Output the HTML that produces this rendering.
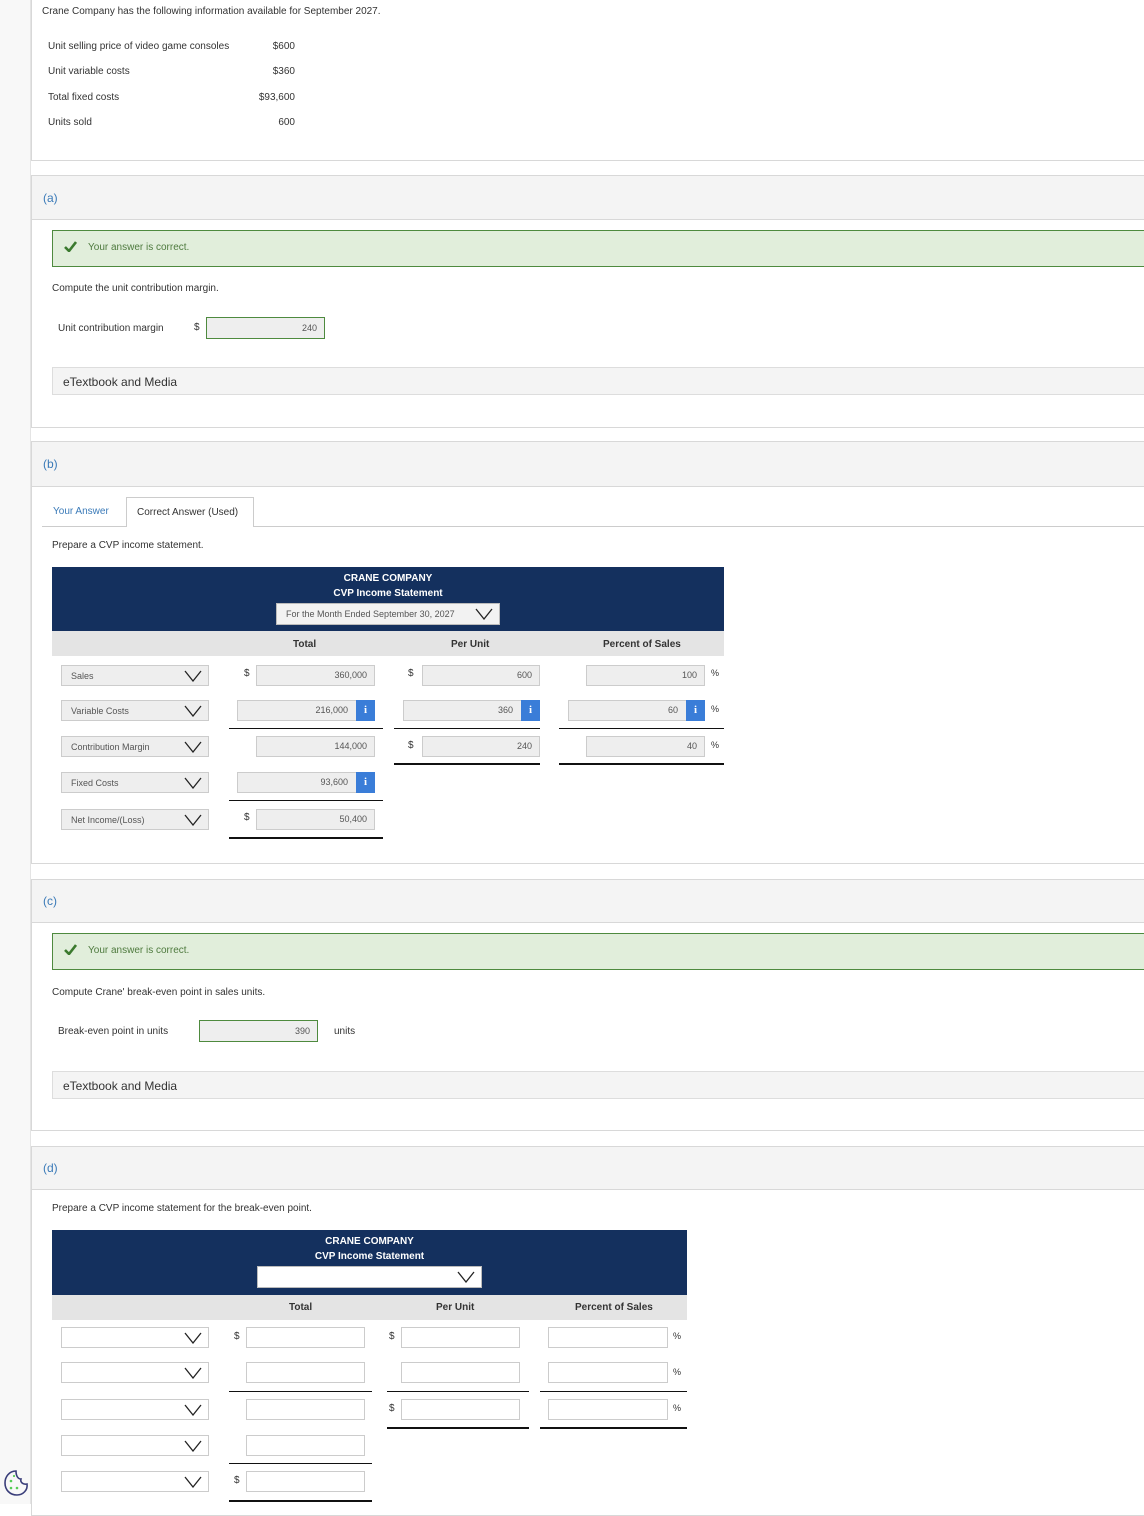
<!DOCTYPE html>
<html><head><meta charset="utf-8"><style>
*{box-sizing:border-box;margin:0;padding:0}
body{width:1144px;height:1504px;position:relative;overflow:hidden;background:#fff;font-family:"Liberation Sans",sans-serif;color:#333;font-size:10px}
.a{position:absolute;white-space:nowrap}
.box{position:absolute;left:31px;width:1120px;border:1px solid #d8d8d8;background:#fff}
.hd{position:absolute;left:31px;width:1120px;background:#f4f4f4;border:1px solid #d8d8d8;color:#3a7ab8;font-size:12px;padding-left:11px}
.ok{position:absolute;left:52px;width:1100px;height:37px;background:#e1eedb;border:1px solid #4e8a3e;color:#4e7a3e;font-size:10px}
.etb{position:absolute;left:52px;width:1100px;height:28px;background:#f4f4f4;border:1px solid #ddd;font-size:12px;padding:7px 10px;color:#333}
.in{position:absolute;height:21px;background:#eee;border:1px solid #ccc;text-align:right;padding:4px 7px 0 0;font-size:9px;color:#555}
.i{position:absolute;right:-1px;top:-1px;width:19px;height:21px;background:#3a7dd8;color:#fff;font-weight:bold;text-align:center;font-family:"Liberation Serif",serif;font-size:11px;line-height:21px;padding:0}
.dd{position:absolute;left:61px;width:148px;height:21px;border:1px solid #ccc;background:#eee;font-size:9px;color:#555;padding:5px 9px}
.dd svg,.sel svg{position:absolute;right:6px;top:4px}
.in.w,.dd.w{background:#fff}
.ln{position:absolute;height:1px;background:#111}
.bar{position:absolute;background:#14305e;color:#fff;font-weight:bold;text-align:center;font-size:10px}
.gr{position:absolute;background:#e4e4e4;font-weight:bold;font-size:10px;color:#333}
.sel{position:absolute;height:22px;background:#fff;border:1px solid #bbb;color:#555;font-size:9px;text-align:left;font-weight:normal;padding:5px 9px}
.ck{position:absolute;left:11px;top:10px}
</style></head><body>
<div class="a" style="left:0;top:0;width:31px;height:1504px;background:#f8f8f8;border-right:1px solid #e4e4e4"></div>

<div class="box" style="top:-2px;height:163px;border-top:none"></div>
<div class="a" style="left:42px;top:6px;font-size:10px">Crane Company has the following information available for September 2027.</div>
<div class="a" style="left:48px;top:41px">Unit selling price of video game consoles</div><div class="a" style="left:260px;width:35px;text-align:right;top:41px">$600</div>
<div class="a" style="left:48px;top:66px">Unit variable costs</div><div class="a" style="left:250px;width:45px;text-align:right;top:66px">$360</div>
<div class="a" style="left:48px;top:92px">Total fixed costs</div><div class="a" style="left:240px;width:55px;text-align:right;top:92px">$93,600</div>
<div class="a" style="left:48px;top:117px">Units sold</div><div class="a" style="left:250px;width:45px;text-align:right;top:117px">600</div>

<!-- (a) -->
<div class="box" style="top:175px;height:253px"></div>
<div class="hd" style="top:175px;height:45px;line-height:44px">(a)</div>
<div class="ok" style="top:230px"><svg class="ck" width="13" height="11" viewBox="0 0 13 11"><path d="M1 6 L5 10 L12 1" fill="none" stroke="#3b7a2e" stroke-width="2.6"/></svg><span class="a" style="left:35px;top:11px">Your answer is correct.</span></div>
<div class="a" style="left:52px;top:283px">Compute the unit contribution margin.</div>
<div class="a" style="left:58px;top:323px">Unit contribution margin</div>
<div class="a" style="left:194px;top:322px">$</div>
<div class="in" style="left:206px;top:317px;width:119px;height:22px;border-color:#4e8a3e;padding-top:5px">240</div>
<div class="etb" style="top:367px">eTextbook and Media</div>

<!-- (b) -->
<div class="box" style="top:441px;height:423px"></div>
<div class="hd" style="top:441px;height:46px;line-height:45px">(b)</div>
<div class="a" style="left:42px;top:526px;width:1110px;height:1px;background:#ccc"></div>
<div class="a" style="left:53px;top:506px;color:#3a7ab8">Your Answer</div>
<div class="a" style="left:126px;top:497px;width:128px;height:30px;border:1px solid #ccc;border-bottom:none;background:#fff;padding:9px 10px;font-size:10px">Correct Answer (Used)</div>
<div class="a" style="left:52px;top:540px">Prepare a CVP income statement.</div>

<div class="bar" style="left:52px;top:567px;width:672px;height:64px">
<div style="margin-top:6px">CRANE COMPANY</div><div style="margin-top:4px">CVP Income Statement</div>
<div class="sel" style="left:224px;top:36px;width:224px;background:#f2f2f2">For the Month Ended September 30, 2027<svg width="18" height="12" viewBox="0 0 18 12"><path d="M1 1 L9 11 L17 1" fill="none" stroke="#222" stroke-width="1.3"/></svg></div>
</div>
<div class="gr" style="left:52px;top:631px;width:672px;height:25px">
<span class="a" style="left:241px;top:8px">Total</span><span class="a" style="left:399px;top:8px">Per Unit</span><span class="a" style="left:551px;top:8px">Percent of Sales</span></div>

<div class="dd" style="top:665px">Sales<svg width="18" height="12" viewBox="0 0 18 12"><path d="M1 1 L9 11 L17 1" fill="none" stroke="#222" stroke-width="1.3"/></svg></div>
<div class="dd" style="top:700px">Variable Costs<svg width="18" height="12" viewBox="0 0 18 12"><path d="M1 1 L9 11 L17 1" fill="none" stroke="#222" stroke-width="1.3"/></svg></div>
<div class="dd" style="top:736px">Contribution Margin<svg width="18" height="12" viewBox="0 0 18 12"><path d="M1 1 L9 11 L17 1" fill="none" stroke="#222" stroke-width="1.3"/></svg></div>
<div class="dd" style="top:772px">Fixed Costs<svg width="18" height="12" viewBox="0 0 18 12"><path d="M1 1 L9 11 L17 1" fill="none" stroke="#222" stroke-width="1.3"/></svg></div>
<div class="dd" style="top:809px">Net Income/(Loss)<svg width="18" height="12" viewBox="0 0 18 12"><path d="M1 1 L9 11 L17 1" fill="none" stroke="#222" stroke-width="1.3"/></svg></div>

<div class="a" style="left:244px;top:668px">$</div><div class="in" style="left:256px;top:665px;width:119px">360,000</div>
<div class="in" style="left:237px;top:700px;width:138px;padding-right:26px">216,000<div class="i">i</div></div>
<div class="ln" style="left:229px;top:728px;width:154px"></div>
<div class="in" style="left:256px;top:736px;width:119px">144,000</div>
<div class="in" style="left:237px;top:772px;width:138px;padding-right:26px">93,600<div class="i">i</div></div>
<div class="ln" style="left:229px;top:800px;width:154px"></div>
<div class="a" style="left:244px;top:812px">$</div><div class="in" style="left:256px;top:809px;width:119px">50,400</div>
<div class="ln" style="left:229px;top:837px;width:154px;height:2px"></div>

<div class="a" style="left:408px;top:668px">$</div><div class="in" style="left:422px;top:665px;width:118px">600</div>
<div class="in" style="left:403px;top:700px;width:137px;padding-right:26px">360<div class="i">i</div></div>
<div class="ln" style="left:394px;top:728px;width:146px"></div>
<div class="a" style="left:408px;top:740px">$</div><div class="in" style="left:422px;top:736px;width:118px">240</div>
<div class="ln" style="left:394px;top:763px;width:146px;height:2px"></div>

<div class="in" style="left:586px;top:665px;width:119px">100</div><div class="a" style="left:711px;top:668px;font-size:9px">%</div>
<div class="in" style="left:568px;top:700px;width:137px;padding-right:26px">60<div class="i">i</div></div><div class="a" style="left:711px;top:704px;font-size:9px">%</div>
<div class="ln" style="left:559px;top:728px;width:165px"></div>
<div class="in" style="left:586px;top:736px;width:119px">40</div><div class="a" style="left:711px;top:740px;font-size:9px">%</div>
<div class="ln" style="left:559px;top:763px;width:165px;height:2px"></div>

<!-- (c) -->
<div class="box" style="top:879px;height:252px"></div>
<div class="hd" style="top:879px;height:44px;line-height:43px">(c)</div>
<div class="ok" style="top:933px"><svg class="ck" width="13" height="11" viewBox="0 0 13 11"><path d="M1 6 L5 10 L12 1" fill="none" stroke="#3b7a2e" stroke-width="2.6"/></svg><span class="a" style="left:35px;top:11px">Your answer is correct.</span></div>
<div class="a" style="left:52px;top:987px">Compute Crane' break-even point in sales units.</div>
<div class="a" style="left:58px;top:1026px">Break-even point in units</div>
<div class="in" style="left:199px;top:1020px;width:119px;height:22px;border-color:#4e8a3e;padding-top:5px">390</div>
<div class="a" style="left:334px;top:1026px">units</div>
<div class="etb" style="top:1071px">eTextbook and Media</div>

<!-- (d) -->
<div class="box" style="top:1146px;height:370px"></div>
<div class="hd" style="top:1146px;height:44px;line-height:43px">(d)</div>
<div class="a" style="left:52px;top:1203px">Prepare a CVP income statement for the break-even point.</div>

<div class="bar" style="left:52px;top:1230px;width:635px;height:65px">
<div style="margin-top:6px">CRANE COMPANY</div><div style="margin-top:4px">CVP Income Statement</div>
<div class="sel" style="left:205px;top:36px;width:225px"><svg width="18" height="12" viewBox="0 0 18 12"><path d="M1 1 L9 11 L17 1" fill="none" stroke="#222" stroke-width="1.3"/></svg></div>
</div>
<div class="gr" style="left:52px;top:1295px;width:635px;height:25px">
<span class="a" style="left:237px;top:7px">Total</span><span class="a" style="left:384px;top:7px">Per Unit</span><span class="a" style="left:523px;top:7px">Percent of Sales</span></div>

<div class="dd w" style="top:1327px"><svg width="18" height="12" viewBox="0 0 18 12"><path d="M1 1 L9 11 L17 1" fill="none" stroke="#222" stroke-width="1.3"/></svg></div>
<div class="dd w" style="top:1362px"><svg width="18" height="12" viewBox="0 0 18 12"><path d="M1 1 L9 11 L17 1" fill="none" stroke="#222" stroke-width="1.3"/></svg></div>
<div class="dd w" style="top:1399px"><svg width="18" height="12" viewBox="0 0 18 12"><path d="M1 1 L9 11 L17 1" fill="none" stroke="#222" stroke-width="1.3"/></svg></div>
<div class="dd w" style="top:1435px"><svg width="18" height="12" viewBox="0 0 18 12"><path d="M1 1 L9 11 L17 1" fill="none" stroke="#222" stroke-width="1.3"/></svg></div>
<div class="dd w" style="top:1471px"><svg width="18" height="12" viewBox="0 0 18 12"><path d="M1 1 L9 11 L17 1" fill="none" stroke="#222" stroke-width="1.3"/></svg></div>

<div class="a" style="left:234px;top:1331px">$</div><div class="in w" style="left:246px;top:1327px;width:119px"></div>
<div class="in w" style="left:246px;top:1362px;width:119px"></div>
<div class="ln" style="left:229px;top:1391px;width:143px"></div>
<div class="in w" style="left:246px;top:1399px;width:119px"></div>
<div class="in w" style="left:246px;top:1435px;width:119px"></div>
<div class="ln" style="left:229px;top:1463px;width:143px"></div>
<div class="a" style="left:234px;top:1475px">$</div><div class="in w" style="left:246px;top:1471px;width:119px"></div>
<div class="ln" style="left:229px;top:1500px;width:143px;height:2px"></div>

<div class="a" style="left:389px;top:1331px">$</div><div class="in w" style="left:401px;top:1327px;width:119px"></div>
<div class="in w" style="left:401px;top:1362px;width:119px"></div>
<div class="ln" style="left:387px;top:1391px;width:142px"></div>
<div class="a" style="left:389px;top:1403px">$</div><div class="in w" style="left:401px;top:1399px;width:119px"></div>
<div class="ln" style="left:387px;top:1427px;width:142px;height:2px"></div>

<div class="in w" style="left:548px;top:1327px;width:120px"></div><div class="a" style="left:673px;top:1331px;font-size:9px">%</div>
<div class="in w" style="left:548px;top:1362px;width:120px"></div><div class="a" style="left:673px;top:1367px;font-size:9px">%</div>
<div class="ln" style="left:540px;top:1391px;width:147px"></div>
<div class="in w" style="left:548px;top:1399px;width:120px"></div><div class="a" style="left:673px;top:1403px;font-size:9px">%</div>
<div class="ln" style="left:540px;top:1427px;width:147px;height:2px"></div>

<svg class="a" style="left:2px;top:1468px" width="28" height="30" viewBox="0 0 28 30"><path d="M14 3 C7 3 3 9 3 15 C3 22 8 27 15 27 C21 27 26 22 25 16 C21 17 18 14 19 11 C16 11 14 8 14 3 Z" fill="none" stroke="#3a3e7a" stroke-width="1.6"/><circle cx="9" cy="13" r="1.3" fill="#5c5"/><circle cx="9" cy="20" r="1.3" fill="#5c5"/><circle cx="15" cy="20" r="1.3" fill="#5c5"/><circle cx="12" cy="8" r="1.1" fill="#5c5"/></svg>
</body></html>
